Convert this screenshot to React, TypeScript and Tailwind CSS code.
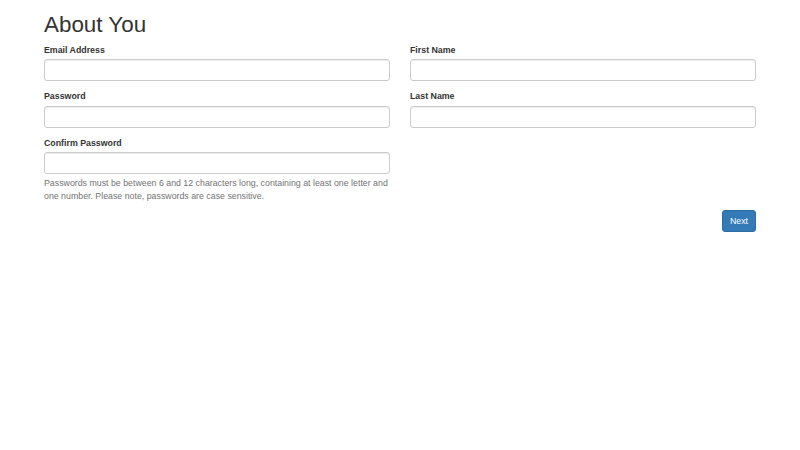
import React from "react"

interface FieldProps {
  label: string
  type?: string
  help?: string
}

function Field({ label, type = "text", help }: FieldProps) {
  return (
    <div className="mb-[9px]">
      <label className="mb-[3px] block text-[8.8px] font-bold leading-[12.5px] text-[#333]">
        {label}
      </label>
      <input
        type={type}
        className="block h-[22px] w-full rounded-[3px] border border-[#ccc] bg-white px-[7px] text-[8.8px] text-[#555] shadow-[inset_0_1px_1px_rgba(0,0,0,0.075)] outline-none"
      />
      {help && (
        <p className="mt-[3px] text-[8.8px] leading-[12.5px] text-[#737373]">
          {help}
        </p>
      )}
    </div>
  )
}

export default function App() {
  return (
    <div
      className="min-h-[450px] bg-white px-[44px] pt-[13px]"
      style={{ fontFamily: '"Liberation Sans", Arial, sans-serif' }}
    >
      <h1 className="mb-[6px] text-[22.4px] font-normal leading-[1.1] text-[#333]">
        About You
      </h1>
      <form onSubmit={(e) => e.preventDefault()}>
        <div className="grid grid-cols-2 gap-x-[20px]">
          <div>
            <Field label="Email Address" type="email" />
            <Field label="Password" type="password" />
            <Field
              label="Confirm Password"
              type="password"
              help="Passwords must be between 6 and 12 characters long, containing at least one letter and one number. Please note, passwords are case sensitive."
            />
          </div>
          <div>
            <Field label="First Name" />
            <Field label="Last Name" />
          </div>
        </div>
        <div className="-mt-[1px] flex justify-end">
          <button
            type="submit"
            className="h-[22px] rounded-[3px] border border-[#2e6da4] bg-[#337ab7] px-[7px] text-[8.8px] text-white"
          >
            Next
          </button>
        </div>
      </form>
    </div>
  )
}
